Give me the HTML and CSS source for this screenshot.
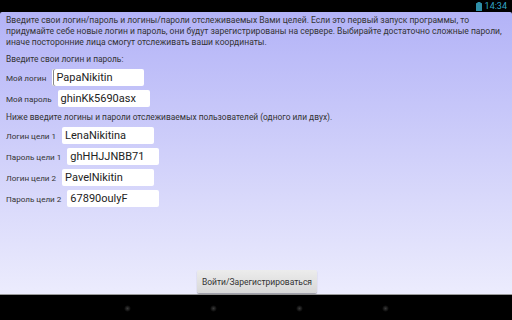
FILE: index.html
```html
<!DOCTYPE html>
<html>
<head>
<meta charset="utf-8">
<link rel="stylesheet" href="styles.css">
</head>
<body>
<div class="screen">
  <div class="statusbar">
    <svg class="battery" width="6" height="9" viewBox="0 0 6 9"><rect x="1.5" y="0" width="3" height="1" fill="#2f8fa8"/><rect x="0" y="1" width="6" height="8" rx="0.5" fill="#2f8fa8"/></svg>
    <span class="clock">14:34</span>
  </div>
  <div class="content">
    <p class="intro">Введите свои логин/пароль и логины/пароли отслеживаемых Вами целей. Если это первый запуск программы, то придумайте себе новые логин и пароль, они будут зарегистрированы на сервере. Выбирайте достаточно сложные пароли, иначе посторонние лица смогут отслеживать ваши координаты.</p>
    <p class="section first">Введите свои логин и пароль:</p>
    <div class="row"><span class="label">Мой логин</span><span class="field cursor">PapaNikitin</span></div>
    <div class="row"><span class="label">Мой пароль</span><span class="field">ghinKk5690asx</span></div>
    <p class="section second">Ниже введите логины и пароли отслеживаемых пользователей (одного или двух).</p>
    <div class="row"><span class="label">Логин цели 1</span><span class="field">LenaNikitina</span></div>
    <div class="row"><span class="label">Пароль цели 1</span><span class="field">ghHHJJNBB71</span></div>
    <div class="row"><span class="label">Логин цели 2</span><span class="field">PavelNikitin</span></div>
    <div class="row"><span class="label">Пароль цели 2</span><span class="field">67890oulyF</span></div>
    <div class="spacer"></div>
    <div class="actions"><button class="btn">Войти/Зарегистрироваться</button></div>
  </div>
  <div class="navbar">
    <span class="dot"></span><span class="dot"></span><span class="dot"></span><span class="dot"></span>
  </div>
</div>
</body>
</html>
```
FILE: styles.css
```css
* { box-sizing: border-box; }
html, body { margin: 0; padding: 0; }
body { width: 512px; height: 320px; overflow: hidden; background: #000; font-family: Roboto, "Noto Sans", sans-serif; }
.screen { display: flex; flex-direction: column; height: 320px; }
.statusbar { height: 12px; background: #000; display: flex; align-items: center; justify-content: flex-end; padding-right: 5px; gap: 3px; }
.battery { display: block; }
.clock { color: #33a6c8; font-size: 9px; line-height: 12px; }
.content { flex: 1; display: flex; flex-direction: column; background: linear-gradient(#b3b3f7, #ececfd); border-top-left-radius: 2px; border-top-right-radius: 2px; padding: 3px 6px 1px; color: #333; font-size: 8.1px; border-bottom: 1px solid #9a9a9a; }
.intro { margin: 0; line-height: 11px; font-size: 8.55px; }
.section { margin: 0; line-height: 11px; font-size: 8.4px; }
.section.first { margin: 6px 0 2px; }
.section.second { margin: 3px 0 2px; }
.row { display: flex; align-items: center; height: 21px; gap: 6px; }
.label { white-space: nowrap; }
.field { width: 92px; height: 17px; background: #fff; border-radius: 2px; color: #222; font-size: 11px; line-height: 17px; padding-left: 3px; }
.field.cursor { box-shadow: inset 1px 0 0 #fff, inset 2px 0 0 #888; padding-left: 4px; }
.spacer { flex: 1; }
.actions { display: flex; justify-content: center; }
.btn { width: 120px; height: 23px; margin-left: 2px; background: linear-gradient(#ececec, #d8d8d8); border: none; border-radius: 2px; box-shadow: 0 1px 1px rgba(0,0,0,0.35); color: #333; font-family: Roboto, "Noto Sans", sans-serif; font-size: 8.5px; padding: 0; }
.navbar { height: 25px; background: #000; display: flex; justify-content: center; gap: 79px; align-items: center; padding-top: 2px; }
.dot { width: 7px; height: 7px; border-radius: 50%; background: radial-gradient(#3a3a3a, #000 70%); }
```
